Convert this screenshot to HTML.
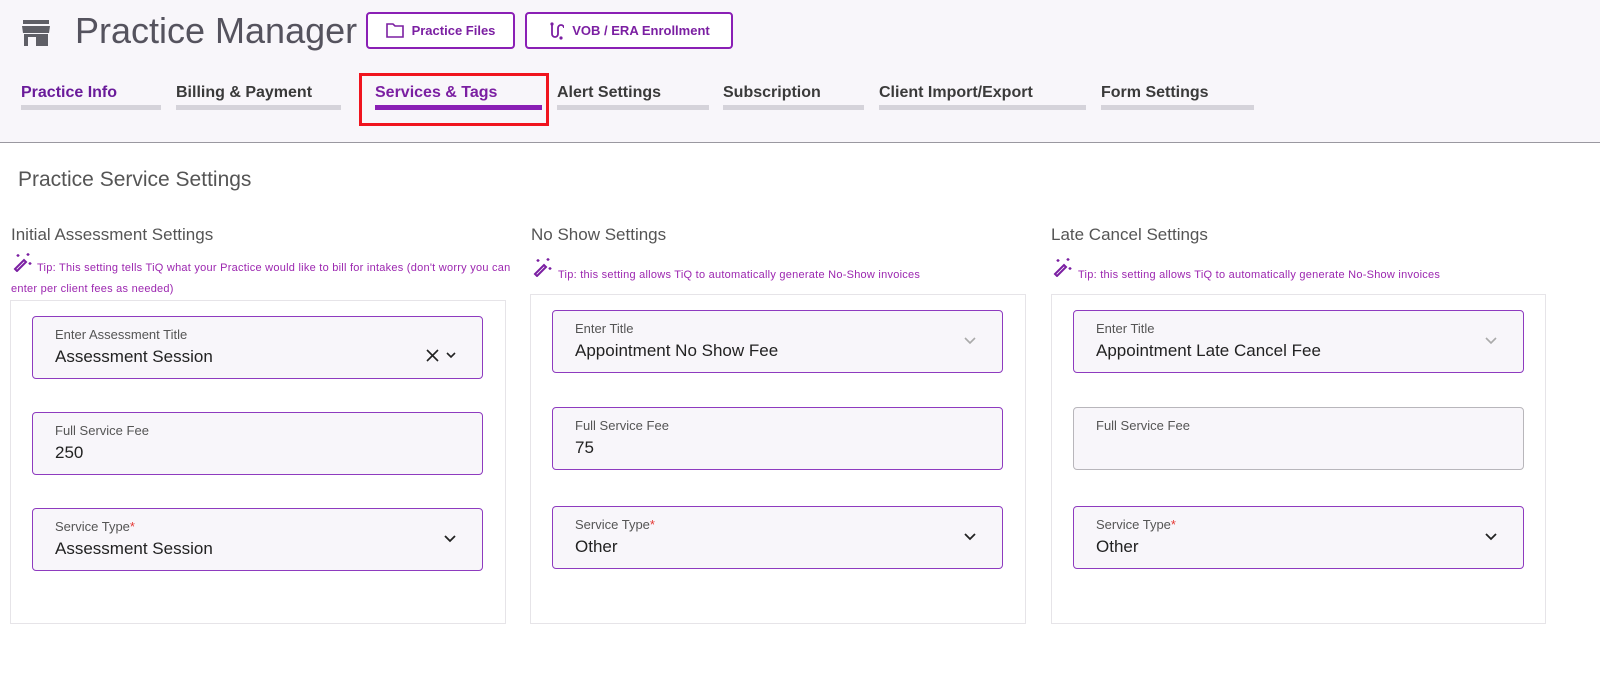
<!DOCTYPE html>
<html><head><style>
*{box-sizing:border-box;margin:0;padding:0}
body{width:1600px;height:679px;background:#fff;font-family:"Liberation Sans",sans-serif;position:relative;overflow:hidden;color:#333}
.hdr{position:absolute;left:0;top:0;width:1600px;height:143px;background:#f8f6fa;border-bottom:1px solid #9a98a0}
.abs{position:absolute}
.btn{position:absolute;top:12px;height:37px;border:2px solid #8a1fb5;border-radius:4px;background:#fff;color:#7b1fa2;font-size:13px;font-weight:bold;display:flex;align-items:center;justify-content:center;gap:8px}
.tab{position:absolute;top:84px;font-size:16px;font-weight:bold;color:#3a3a3a}
.bar{position:absolute;top:105px;height:5px;background:#d5d3da}
.sec{position:absolute;top:225px;font-size:17px;color:#555}
.tip{position:absolute;font-size:11px;color:#9c27b0;line-height:21px;letter-spacing:0.25px}
.panel{position:absolute;border:1px solid #e6e4e8;background:#fff}
.fld{position:absolute;width:451px;height:63px;border:1px solid #8e3bbf;border-radius:4px;background:#f8f6fa}
.fld.dis{border-color:#b8b6bb}
.lbl{position:absolute;left:22px;top:10px;font-size:13px;color:#555}
.val{position:absolute;left:22px;top:30px;font-size:17px;color:#222}
.req{color:#e53935}
.chev{position:absolute;right:26px;top:26px}
</style></head><body>
<div class="hdr"></div>
<svg class="abs" style="left:22px;top:20px" width="28" height="26" viewBox="0 0 28 26"><rect x="1" y="0" width="26" height="4" fill="#5f5f66"/><path d="M0 6h28l-1 7H1z" fill="#5f5f66"/><rect x="2" y="14" width="24" height="12" fill="#5f5f66"/><rect x="6" y="17" width="8" height="9" fill="#f8f6fa"/></svg>
<div class="abs" style="left:75px;top:10px;font-size:36px;color:#55535e">Practice Manager</div>
<div class="btn" style="left:366px;width:149px"><svg width="18" height="15" viewBox="0 0 18 15"><path d="M1 1h6l2 2h8v11H1z" fill="none" stroke="#7b1fa2" stroke-width="1.6"/></svg>Practice Files</div>
<div class="btn" style="left:525px;width:208px"><svg width="16" height="18" viewBox="0 0 16 18"><path d="M4 2v10a3 3 0 0 0 6 0V6a3 3 0 0 1 6 0" fill="none" stroke="#7b1fa2" stroke-width="1.8"/><circle cx="4" cy="2" r="1.6" fill="#7b1fa2"/><circle cx="13" cy="16" r="1.6" fill="#7b1fa2"/></svg>VOB / ERA Enrollment</div>
<div class="tab" style="left:21px;color:#6a1b9a">Practice Info</div><div class="bar" style="left:21px;width:140px"></div>
<div class="tab" style="left:176px">Billing &amp; Payment</div><div class="bar" style="left:176px;width:165px"></div>
<div class="tab" style="left:375px;color:#7b1fa2">Services &amp; Tags</div><div class="bar" style="left:375px;width:167px;background:#8a1fb5"></div>
<div class="abs" style="left:359px;top:73px;width:190px;height:53px;border:3px solid #f0141e"></div>
<div class="tab" style="left:557px">Alert Settings</div><div class="bar" style="left:557px;width:152px"></div>
<div class="tab" style="left:723px">Subscription</div><div class="bar" style="left:723px;width:141px"></div>
<div class="tab" style="left:879px">Client Import/Export</div><div class="bar" style="left:879px;width:207px"></div>
<div class="tab" style="left:1101px">Form Settings</div><div class="bar" style="left:1101px;width:153px"></div>
<div class="abs" style="left:18px;top:168px;font-size:21px;color:#555">Practice Service Settings</div>

<div class="sec" style="left:11px">Initial Assessment Settings</div>
<div class="sec" style="left:531px">No Show Settings</div>
<div class="sec" style="left:1051px">Late Cancel Settings</div>

<svg class="abs" style="left:13px;top:252px" width="20" height="20" viewBox="0 0 20 20"><path d="M2 17l9-9 2 2-9 9z" fill="none" stroke="#7b1fa2" stroke-width="2"/><path d="M5 2v3M3.5 3.5h3M15 1v3M13.5 2.5h3M17 10v3M15.5 11.5h3" stroke="#7b1fa2" stroke-width="1.3"/></svg>
<div class="tip" style="left:11px;top:258px;width:500px;text-indent:26px">Tip: This setting tells TiQ what your Practice would like to bill for intakes (don't worry you can enter per client fees as needed)</div>
<svg class="abs" style="left:533px;top:257px" width="20" height="20" viewBox="0 0 20 20"><path d="M2 17l9-9 2 2-9 9z" fill="none" stroke="#7b1fa2" stroke-width="2"/><path d="M5 2v3M3.5 3.5h3M15 1v3M13.5 2.5h3M17 10v3M15.5 11.5h3" stroke="#7b1fa2" stroke-width="1.3"/></svg>
<div class="tip" style="left:558px;top:265px">Tip: this setting allows TiQ to automatically generate No-Show invoices</div>
<svg class="abs" style="left:1053px;top:257px" width="20" height="20" viewBox="0 0 20 20"><path d="M2 17l9-9 2 2-9 9z" fill="none" stroke="#7b1fa2" stroke-width="2"/><path d="M5 2v3M3.5 3.5h3M15 1v3M13.5 2.5h3M17 10v3M15.5 11.5h3" stroke="#7b1fa2" stroke-width="1.3"/></svg>
<div class="tip" style="left:1078px;top:265px">Tip: this setting allows TiQ to automatically generate No-Show invoices</div>

<div class="panel" style="left:10px;top:300px;width:496px;height:324px"></div>
<div class="panel" style="left:530px;top:294px;width:496px;height:330px"></div>
<div class="panel" style="left:1051px;top:294px;width:495px;height:330px"></div>

<div class="fld" style="left:32px;top:316px"><div class="lbl">Enter Assessment Title</div><div class="val">Assessment Session</div>
<svg class="chev" style="right:22px;top:32px" width="34" height="14" viewBox="0 0 34 14"><path d="M1 1l11 11M12 1L1 12" stroke="#222" stroke-width="1.6"/><path d="M21 4l4 4 4-4" fill="none" stroke="#222" stroke-width="1.6"/></svg></div>
<div class="fld" style="left:32px;top:412px"><div class="lbl">Full Service Fee</div><div class="val">250</div></div>
<div class="fld" style="left:32px;top:508px"><div class="lbl">Service Type<span class="req">*</span></div><div class="val">Assessment Session</div>
<svg class="chev" width="12" height="8" viewBox="0 0 12 8"><path d="M1 1l5 5 5-5" fill="none" stroke="#222" stroke-width="1.8"/></svg></div>

<div class="fld" style="left:552px;top:310px"><div class="lbl">Enter Title</div><div class="val">Appointment No Show Fee</div>
<svg class="chev" width="12" height="8" viewBox="0 0 12 8"><path d="M1 1l5 5 5-5" fill="none" stroke="#aaa" stroke-width="1.6"/></svg></div>
<div class="fld" style="left:552px;top:407px"><div class="lbl">Full Service Fee</div><div class="val">75</div></div>
<div class="fld" style="left:552px;top:506px"><div class="lbl">Service Type<span class="req">*</span></div><div class="val">Other</div>
<svg class="chev" width="12" height="8" viewBox="0 0 12 8"><path d="M1 1l5 5 5-5" fill="none" stroke="#222" stroke-width="1.8"/></svg></div>

<div class="fld" style="left:1073px;top:310px"><div class="lbl">Enter Title</div><div class="val">Appointment Late Cancel Fee</div>
<svg class="chev" width="12" height="8" viewBox="0 0 12 8"><path d="M1 1l5 5 5-5" fill="none" stroke="#aaa" stroke-width="1.6"/></svg></div>
<div class="fld dis" style="left:1073px;top:407px"><div class="lbl">Full Service Fee</div></div>
<div class="fld" style="left:1073px;top:506px"><div class="lbl">Service Type<span class="req">*</span></div><div class="val">Other</div>
<svg class="chev" width="12" height="8" viewBox="0 0 12 8"><path d="M1 1l5 5 5-5" fill="none" stroke="#222" stroke-width="1.8"/></svg></div>
</body></html>
